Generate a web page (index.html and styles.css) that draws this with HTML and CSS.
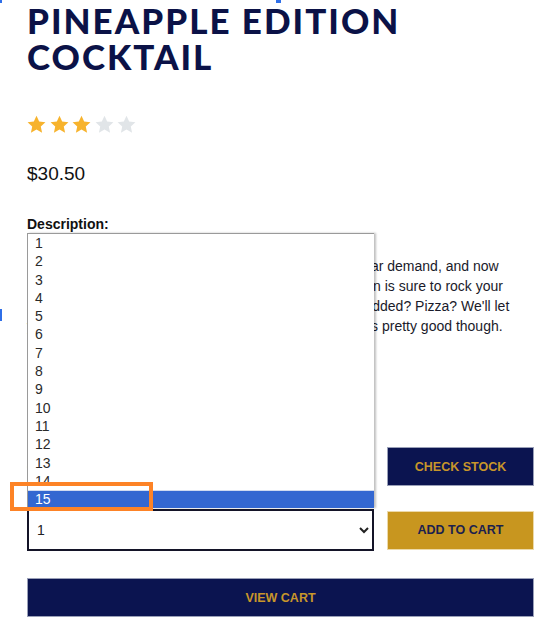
FILE: index.html
```html
<!DOCTYPE html>
<html lang="en">
<head>
<meta charset="utf-8">
<title>Pineapple Edition Cocktail</title>
<link rel="stylesheet" href="styles.css">
</head>
<body>
<span class="mark mark-a"></span>
<span class="mark mark-b"></span>
<span class="mark mark-c"></span>
<main class="product">
  <h1 class="title">PINEAPPLE EDITION<br>COCKTAIL</h1>
  <div class="stars" aria-label="3 out of 5 stars">
    <svg class="star on" viewBox="0 0 20 20"><polygon points="10,0.8 12.8,6.8 19.4,7.5 14.5,12 15.9,18.6 10,15.2 4.1,18.6 5.5,12 0.6,7.5 7.2,6.8"/></svg>
    <svg class="star on" viewBox="0 0 20 20"><polygon points="10,0.8 12.8,6.8 19.4,7.5 14.5,12 15.9,18.6 10,15.2 4.1,18.6 5.5,12 0.6,7.5 7.2,6.8"/></svg>
    <svg class="star on" viewBox="0 0 20 20"><polygon points="10,0.8 12.8,6.8 19.4,7.5 14.5,12 15.9,18.6 10,15.2 4.1,18.6 5.5,12 0.6,7.5 7.2,6.8"/></svg>
    <svg class="star" viewBox="0 0 20 20"><polygon points="10,0.8 12.8,6.8 19.4,7.5 14.5,12 15.9,18.6 10,15.2 4.1,18.6 5.5,12 0.6,7.5 7.2,6.8"/></svg>
    <svg class="star" viewBox="0 0 20 20"><polygon points="10,0.8 12.8,6.8 19.4,7.5 14.5,12 15.9,18.6 10,15.2 4.1,18.6 5.5,12 0.6,7.5 7.2,6.8"/></svg>
  </div>
  <p class="price">$30.50</p>
  <p class="desc-label">Description:</p>
  <p class="desc">Our famous Pineapple Edition Cocktail is back by popular demand, and now<br>available again for a limited time! This tropical concoction is sure to rock your<br>socks off this summer. So what else could possibly be added? Pizza? We'll let<br>you be the judge of that one. Personally, we just think it's pretty good though.</p>

  <form class="buy">
    <label class="qty-label" for="qty">Quantity:</label>
    <button type="button" class="btn btn-navy">CHECK STOCK</button>
    <select id="qty" class="qty">
      <option>1</option><option>2</option><option>3</option><option>4</option><option>5</option>
      <option>6</option><option>7</option><option>8</option><option>9</option><option>10</option>
      <option>11</option><option>12</option><option>13</option><option>14</option><option>15</option>
    </select>
    <button type="button" class="btn btn-gold">ADD TO CART</button>
    <button type="button" class="btn btn-navy btn-wide">VIEW CART</button>
  </form>
</main>

<ul class="popup">
  <li>1</li><li>2</li><li>3</li><li>4</li><li>5</li>
  <li>6</li><li>7</li><li>8</li><li>9</li><li>10</li>
  <li>11</li><li>12</li><li>13</li><li>14</li><li class="sel">15</li>
</ul>
<div class="callout"></div>
</body>
</html>
```
FILE: styles.css
```css
html, body {
  margin: 0;
  padding: 0;
  background: #ffffff;
}
body {
  font-family: "Liberation Sans", Arial, sans-serif;
  color: #111111;
  width: 550px;
  height: 622px;
  overflow: hidden;
  position: relative;
}
.product {
  padding: 0 16px 0 27px;
  width: 507px;
}
.title {
  margin: 0;
  padding-top: 2px;
  font-family: "Lato", "Liberation Sans", sans-serif;
  font-weight: 900;
  font-size: 35px;
  line-height: 36px;
  letter-spacing: 2px;
  color: #0b1247;
}
.stars {
  display: flex;
  gap: 3.5px;
  margin-top: 41px;
  height: 19px;
}
.star {
  width: 19px;
  height: 19px;
  fill: #e1e5e8;
}
.star.on {
  fill: #f7b32d;
}
.price {
  margin: 29px 0 0;
  font-size: 19px;
  line-height: 22px;
  color: #111;
}
.desc-label {
  margin: 29px 0 0;
  font-size: 14px;
  font-weight: bold;
  line-height: 20px;
  color: #111;
}
.desc {
  margin: 22px 0 0;
  font-size: 14px;
  line-height: 20px;
  white-space: nowrap;
  color: #1a1a2a;
}
.buy {
  display: grid;
  grid-template-columns: 347px 147px;
  column-gap: 13px;
  row-gap: 23px;
  align-items: center;
  margin-top: 111px;
}
.qty-label {
  font-size: 14px;
  font-weight: bold;
}
.qty {
  height: 42px;
  width: 347px;
  box-sizing: border-box;
  border: 2px solid #141428;
  border-radius: 0;
  background: #fff;
  font-family: "Liberation Sans", Arial, sans-serif;
  font-size: 14px;
  padding: 0 4px;
  color: #222;
}
.btn {
  height: 39px;
  border: 1px solid transparent;
  font-family: "Liberation Sans", Arial, sans-serif;
  font-weight: bold;
  font-size: 12.5px;
  padding: 0;
  cursor: pointer;
}
.btn-navy {
  background: #0b1450;
  color: #c8962a;
  border-color: #9aa0b8;
}
.btn-gold {
  background: #c8961f;
  color: #1b1f4e;
  border-color: #ecd9a8;
}
.btn-wide {
  grid-column: 1 / -1;
  margin-top: 4px;
}
.popup {
  position: absolute;
  left: 27px;
  top: 233px;
  width: 346px;
  margin: 0;
  padding: 0;
  list-style: none;
  background: #fff;
  border-top: 1px solid #9a9a9a;
  border-left: 1px solid #9a9a9a;
  box-shadow: 2px 0 2px rgba(0, 0, 0, 0.25);
}
.popup li {
  height: 18.3px;
  line-height: 18.3px;
  padding-left: 7px;
  font-size: 14px;
  color: #2a2a2a;
}
.popup li.sel {
  background: #3367d1;
  color: #ffffff;
  box-shadow: inset 0 1px 0 #cfdaf0;
}
.callout {
  position: absolute;
  left: 10px;
  top: 482px;
  width: 135px;
  height: 21px;
  border: 4px solid #fd8326;
}
.mark {
  position: absolute;
  background: #2f6fe8;
}
.mark-a { left: 0; top: 0; width: 2px; height: 3px; }
.mark-b { left: 276px; top: 0; width: 5px; height: 3px; }
.mark-c { left: 0; top: 309px; width: 2px; height: 12px; }
```
